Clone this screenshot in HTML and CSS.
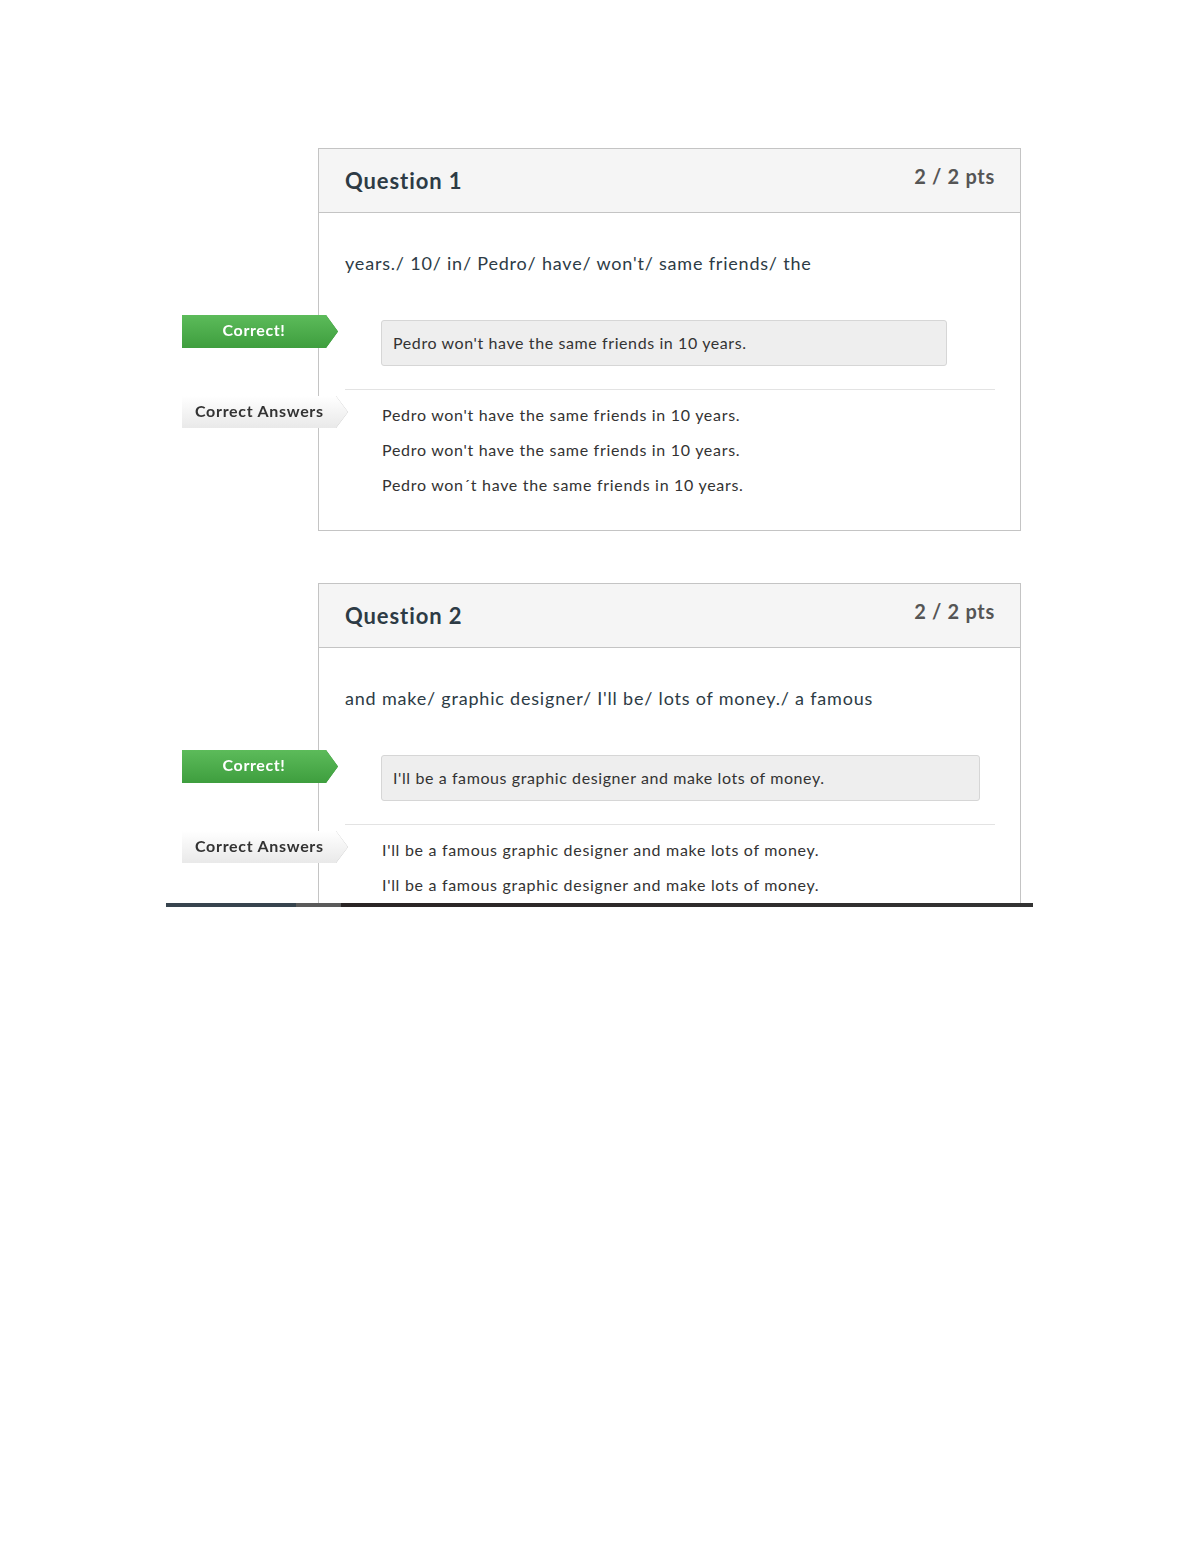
FILE: index.html
```html
<!DOCTYPE html>
<html lang="en">
<head>
  <meta charset="UTF-8">
  <title>Quiz Results</title>
  <link rel="stylesheet" href="styles.css">
</head>
<body>

  <div class="page">

    <div class="question">
      <div class="question-header">
        <span class="question-title">Question 1</span>
        <span class="question-pts">2 / 2 pts</span>
      </div>
      <div class="question-body">
        <p class="question-text">years./ 10/ in/ Pedro/ have/ won't/ same friends/ the</p>

        <div class="answer-row">
          <div class="flag-wrap flag-correct"><div class="flag">Correct!</div></div>
          <div class="answer-box answer-box-q1">Pedro won't have the same friends in 10 years.</div>
        </div>

        <div class="correct-answers">
          <div class="flag-wrap flag-answers"><div class="flag">Correct Answers</div></div>
          <div class="answer-line">Pedro won't have the same friends in 10 years.</div>
          <div class="answer-line">Pedro won't have the same friends in 10 years.</div>
          <div class="answer-line">Pedro won´t have the same friends in 10 years.</div>
        </div>
      </div>
    </div>

    <div class="question question-cut">
      <div class="question-header">
        <span class="question-title">Question 2</span>
        <span class="question-pts">2 / 2 pts</span>
      </div>
      <div class="question-body">
        <p class="question-text">and make/ graphic designer/ I'll be/ lots of money./ a famous</p>

        <div class="answer-row">
          <div class="flag-wrap flag-correct"><div class="flag">Correct!</div></div>
          <div class="answer-box answer-box-q2">I'll be a famous graphic designer and make lots of money.</div>
        </div>

        <div class="correct-answers">
          <div class="flag-wrap flag-answers"><div class="flag">Correct Answers</div></div>
          <div class="answer-line">I'll be a famous graphic designer and make lots of money.</div>
          <div class="answer-line">I'll be a famous graphic designer and make lots of money.</div>
        </div>
      </div>
    </div>

    <div class="page-edge"></div>

  </div>

</body>
</html>
```

FILE: styles.css
```css
body {
  margin: 0;
  background: #fff;
  font-family: Lato, "Open Sans", Arial, sans-serif;
  color: #2d3b45;
}

.page {
  padding-top: 148px;
  height: 1405px;
}

.question {
  margin-left: 318px;
  width: 703px;
  box-sizing: border-box;
  border: 1px solid #c4c4c4;
  margin-bottom: 52px;
}

.question-cut {
  height: 320px;
  border-bottom: none;
  margin-bottom: 0;
}

.question-header {
  height: 63px;
  background: #f5f5f5;
  border-bottom: 1px solid #c4c4c4;
  display: flex;
  justify-content: space-between;
  align-items: flex-start;
  padding: 0 25px 0 26px;
}

.question-title {
  font-size: 22px;
  font-weight: bold;
  letter-spacing: 0.9px;
  margin-top: 18px;
  color: #2d3b45;
}

.question-pts {
  font-size: 20px;
  font-weight: bold;
  letter-spacing: 0.7px;
  margin-top: 15px;
  color: #555;
}

.question-body {
  padding: 37px 25px 28px 26px;
}

.question-text {
  margin: 0;
  font-size: 18px;
  line-height: 27px;
  letter-spacing: 0.8px;
}

.answer-row {
  position: relative;
  margin-top: 43px;
  padding-bottom: 23px;
  border-bottom: 1px solid #e3e3e3;
}

.answer-box {
  margin-left: 36px;
  height: 44px;
  line-height: 44px;
  padding: 0 11px;
  background: #eee;
  border: 1px solid #d6d6d6;
  border-radius: 3px;
  font-size: 16px;
  letter-spacing: 0.6px;
  color: #333;
}

.answer-box-q1 {
  width: 542px;
}

.answer-box-q2 {
  width: 575px;
}

.correct-answers {
  position: relative;
  padding: 7px 0 0 37px;
}

.answer-line {
  font-size: 16px;
  line-height: 35px;
  letter-spacing: 0.7px;
  color: #333;
}

/* flags hang over the left border of the question */
.flag-wrap {
  position: absolute;
  left: -163px;
}

.flag {
  box-sizing: border-box;
  font-size: 16px;
  font-weight: bold;
  clip-path: polygon(0 0, calc(100% - 12px) 0, 100% 50%, calc(100% - 12px) 100%, 0 100%);
}

.flag-correct {
  top: -5px;
  filter: drop-shadow(0 0 0.5px #2f8a2f);
}

.flag-correct .flag {
  width: 156px;
  height: 33px;
  line-height: 30px;
  padding-right: 12px;
  text-align: center;
  letter-spacing: 0.6px;
  color: #fff;
  background: linear-gradient(#5cbb5a, #3e9e3e);
}

.flag-answers {
  top: 6px;
  filter: drop-shadow(0 0 0.6px #aaa);
}

.flag-answers .flag {
  width: 166px;
  height: 32px;
  line-height: 30px;
  padding-left: 13px;
  letter-spacing: 0.7px;
  color: #333;
  background: linear-gradient(#fff, #e9e9e9);
}

.page-edge {
  margin-left: 166px;
  width: 867px;
  height: 4px;
  background: linear-gradient(to right, #37444e 0, #37444e 130px, #5a5a5a 130px, #5a5a5a 175px, #2a2424 175px, #333 100%);
}
```
